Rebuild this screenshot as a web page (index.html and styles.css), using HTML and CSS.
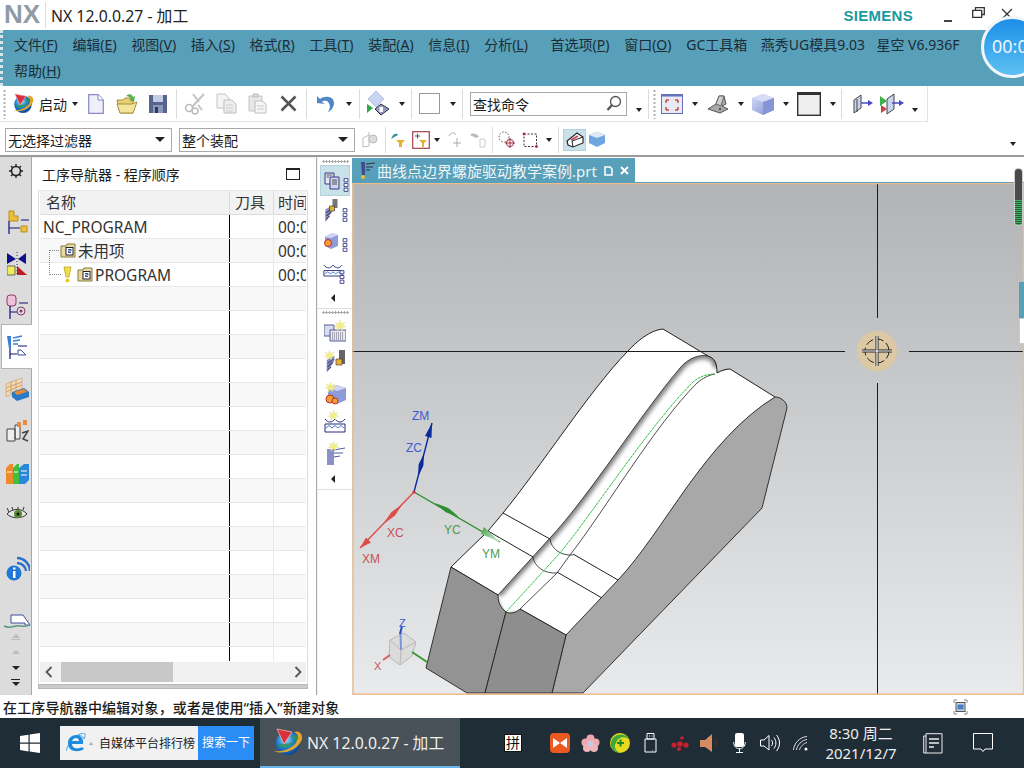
FILE: index.html
```html
<!DOCTYPE html>
<html lang="zh-CN">
<head>
<meta charset="utf-8">
<title>NX 12.0.0.27 - 加工</title>
<link rel="stylesheet" href="styles.css">
</head>
<body>
<svg class="defs" width="0" height="0" aria-hidden="true">
  <defs>
    <linearGradient id="bg" x1="0" y1="0" x2="0" y2="1"><stop offset="0" stop-color="#b2b3b5"/><stop offset="1" stop-color="#e9eaeb"/></linearGradient>
    <radialGradient id="globe" cx=".4" cy=".35" r=".7"><stop offset="0" stop-color="#9fe0f0"/><stop offset=".5" stop-color="#1f7fd0"/><stop offset="1" stop-color="#0d3f90"/></radialGradient>
    <linearGradient id="cube" x1="0" y1="0" x2="1" y2="1"><stop offset="0" stop-color="#d5dcf5"/><stop offset="1" stop-color="#7f8fd0"/></linearGradient>
    <linearGradient id="ymtip" x1="0" y1="0" x2="1" y2="1"><stop offset="0" stop-color="#3f9f3f"/><stop offset="1" stop-color="#e4f4e4"/></linearGradient>
    <filter id="soft" x="-20%" y="-20%" width="140%" height="140%"><feGaussianBlur stdDeviation="2"/></filter>
    <clipPath id="grooveclip"><path d="M498 595L550 538C590 495 640 415 680 368C688 358 700 354 708 356C714 358 717 362 717 368V373L715 374C709 375 703 378 697 383C655 425 605 510 570 555L557 573L520 609C516 613 510 614 506 612C500 607 498 602 498 595Z"/></clipPath>
    <symbol id="nxball" viewBox="0 0 30 30">
      <circle cx="15" cy="16" r="12" fill="url(#globe)"/>
      <path d="M5 19C9 14 14 20 22 13L17 9L24 8L24 15L22 13C15 24 8 20 5 19Z" fill="#2f9a50" opacity=".8"/>
      <path d="M1 24C9 28 25 24 29 12C30 6 25 3 21 5C26 7 26 12 22 17C16 23 8 25 1 24Z" fill="#e3a52a"/>
      <path d="M4 2L19 5L11 17Z" fill="#d8303c" stroke="#f4b0b0" stroke-width=".8"/>
    </symbol>
    <symbol id="treemini" viewBox="0 0 12 22">
      <path d="M3 1H9V6H3ZM3 8.500H9V13.500H3ZM3 16H9V21H3Z" fill="#fff" stroke="#242a78" stroke-width="1.300"/>
    </symbol>
    <symbol id="star" viewBox="0 0 14 14">
      <path d="M7 0L8.400 4.600L13 2.500L10 6.400L14 8L9.400 8.600L10 13L7 9.600L3.600 13L4.300 8.600L0 8L4 6.400L1.200 2.500L5.600 4.600Z" fill="#f4ee80" stroke="#d8d8a0" stroke-width=".4"/>
    </symbol>
    <symbol id="folder" viewBox="0 0 16 15">
      <path d="M1 3H6L7 1H15V14H1Z" fill="#e6d9a0" stroke="#8a7a3a"/>
      <rect x="6" y="4.500" width="7" height="7.500" fill="#fff" stroke="#223"/>
      <path d="M8 6.500H11V8H8.500V9.500H11" fill="none" stroke="#3050a0"/>
    </symbol>
    <symbol id="mill" viewBox="0 0 14 26">
      <path d="M2 10L11 5V11L2 25Z" fill="#8a90c0"/>
      <path d="M3 14L10 9M3 18L9 13M3 22L7 18" stroke="#3a3f70" stroke-width="1.200"/>
    </symbol>
  </defs>
</svg>

<div class="app">
  <header class="titlebar">
    <span class="logo">NX</span>
    <span class="title">NX 12.0.0.27 - 加工</span>
    <span class="brand">SIEMENS</span>
    <span class="winmin"></span>
    <svg class="winrestore" width="13" height="11" viewBox="0 0 13 11"><path d="M3.500 3V.7H12.300V7.500H10M.7 3.300H9.700V10.300H.7Z" fill="none" stroke="#333" stroke-width="1.300"/></svg>
  </header>

  <nav class="menubar">
    <span class="menu-item">文件(<u>F</u>)</span>
    <span class="menu-item">编辑(<u>E</u>)</span>
    <span class="menu-item">视图(<u>V</u>)</span>
    <span class="menu-item">插入(<u>S</u>)</span>
    <span class="menu-item">格式(<u>R</u>)</span>
    <span class="menu-item">工具(<u>T</u>)</span>
    <span class="menu-item">装配(<u>A</u>)</span>
    <span class="menu-item">信息(<u>I</u>)</span>
    <span class="menu-item">分析(<u>L</u>)</span>
    <span class="menu-item wide">首选项(<u>P</u>)</span>
    <span class="menu-item">窗口(<u>O</u>)</span>
    <span class="menu-item tight">GC工具箱</span>
    <span class="menu-item tighter">燕秀UG模具9.03</span>
    <span class="menu-item">星空 V6.936F</span>
    <span class="menu-item break">帮助(<u>H</u>)</span>
  </nav>

  <div class="toolbar tb1">
    <span class="grip"></span>
    <svg class="ml6" width="22" height="23"><use href="#nxball"/></svg>
    <span class="ml5 tb-text">启动</span>
    <span class="ml5 arrow"></span>
    <svg class="ml10" width="16" height="20" viewBox="0 0 16 20"><path d="M.7.700H10L15.300 6V19.300H.7Z" fill="#f0f0fd" stroke="#8888c4" stroke-width="1.200"/><path d="M10 .7V6H15.300" fill="#fff" stroke="#8888c4"/></svg>
    <svg class="ml12" width="22" height="22" viewBox="0 0 22 22"><path d="M1 7H7L9 5H17V20H4Z" fill="#e8cf72" stroke="#a89040"/><path d="M1 11H16L21 9L17 20H4Z" fill="#f4e49c" stroke="#a89040"/><path d="M10 3C13 0 16 1 17 4L19 3L18 9L13 7L15 6C14 4 12 3 10 3Z" fill="#58b04c"/></svg>
    <svg class="ml11" width="18" height="18" viewBox="0 0 18 18"><path d="M0 0H18V18H0Z" fill="#55658f"/><path d="M4 0H14V7H4Z" fill="#c6cde2"/><path d="M4 10H14V18H4Z" fill="#8b97b8"/><path d="M6 12H9V18H6Z" fill="#2e3a5c"/></svg>
    <span class="ml9 sep"></span>
    <svg class="ml7" width="22" height="22" viewBox="0 0 22 22"><path d="M20 1L8 14M9 1L15 9M14 12L18 17" stroke="#c4c4c4" stroke-width="2" fill="none"/><circle cx="5" cy="15" r="3.500" fill="none" stroke="#bbb" stroke-width="1.500"/><circle cx="11" cy="18" r="3" fill="none" stroke="#bbb" stroke-width="1.500"/></svg>
    <svg class="ml10" width="21" height="21" viewBox="0 0 21 21"><path d="M1 1H9L13 5V15H1Z" fill="#f4f4f4" stroke="#c4c4c4"/><path d="M8 7H16L20 11V20H8Z" fill="#efefef" stroke="#bdbdbd"/><path d="M10 12H17M10 15H17M10 18H17" stroke="#ccc"/></svg>
    <svg class="ml11" width="19" height="21" viewBox="0 0 19 21"><path d="M1 3H14V18H1Z" fill="#e8e8e8" stroke="#c4c4c4"/><path d="M5 1H10V4H5Z" fill="#ddd" stroke="#bbb"/><path d="M7 8H14L18 11V20H7Z" fill="#f6f6f6" stroke="#bdbdbd"/><path d="M9 13H16M9 16H16" stroke="#ccc"/></svg>
    <svg class="ml13" width="17" height="17" viewBox="0 0 17 17"><path d="M1.500 1.500L15.500 15.500M15.500 1.500L1.500 15.500" stroke="#555" stroke-width="2.600"/></svg>
    <span class="ml9 sep"></span>
    <svg class="ml10" width="18" height="19" viewBox="0 0 18 19"><path d="M0 9V2L3 5C8 1 17 2 17 9C17 13 14 17 11 18C13 15 14 11 11 8C9 6 6 7 5 8L8 10Z" fill="#4f86c8"/></svg>
    <span class="ml11 arrow"></span>
    <span class="ml7 sep"></span>
    <svg class="ml7" width="23" height="25" viewBox="0 0 23 25"><path d="M9 0L17 8L9 16L1 8Z" fill="#c9d3f2" stroke="#98a4d0" stroke-width=".6"/><path d="M14 13L22 18L14 24L8 18Z" fill="#8e96c8" stroke="#333"/><path d="M12.500 16H16V21H12.500Z" fill="#fff"/><path d="M0 13L6 17L0 22Z" fill="#2ea84c"/></svg>
    <span class="ml9 arrow"></span>
    <span class="ml6 sep"></span>
    <span class="ml7 blank-box"></span>
    <span class="ml10 arrow"></span>
    <span class="ml6 sep"></span>
    <div class="ml7 search">
      <span>查找命令</span>
      <svg width="16" height="17" viewBox="0 0 16 17"><circle cx="9.500" cy="6.500" r="5" fill="#fff" stroke="#555" stroke-width="1.300"/><path d="M6 10L1.500 15" stroke="#555" stroke-width="2.400"/></svg>
    </div>
    <span class="ml9 arrow low"></span>
    <span class="ml6 sep"></span>
    <span class="ml4 grip"></span>
    <svg class="ml5" width="22" height="20" viewBox="0 0 22 20"><rect x=".5" y=".5" width="21" height="19" fill="#e8eaf8" stroke="#6670b8"/><path d="M.5 .5H21.500V2.500H.5Z" fill="#6670b8"/><path d="M5 6L8 6M5 6L5 9M17 6L14 6M17 6L17 9M5 16L8 16M5 16L5 13M17 16L14 16M17 16L17 13" stroke="#d04a34" stroke-width="1.500"/></svg>
    <span class="ml9 arrow"></span>
    <svg class="ml9" width="22" height="20" viewBox="0 0 22 20"><path d="M1 15L9 10L12 2H17L19 10L15 12L21 15L13 19Z" fill="#a8a8a8" stroke="#555"/><path d="M12 2L9 10L14 12L17 2Z" fill="#cfcfcf" stroke="#666"/><circle cx="13" cy="15" r="1" fill="#333"/></svg>
    <span class="ml9 arrow"></span>
    <svg class="ml8" width="22" height="22" viewBox="0 0 22 22"><path d="M11 1L22 5V17L11 22L0 17V5Z" fill="url(#cube)"/><path d="M0 5L11 1L22 5L11 9Z" fill="#d6dcf6"/><path d="M11 9L22 5V17L11 22Z" fill="#8595d6"/></svg>
    <span class="ml9 arrow"></span>
    <svg class="ml8" width="24" height="24" viewBox="0 0 24 24"><rect x=".7" y=".7" width="22.600" height="22.600" fill="#efefef" stroke="#333" stroke-width="1.400"/><path d="M0 0H24V3H0Z" fill="#333"/></svg>
    <span class="ml9 arrow"></span>
    <span class="ml5 sep"></span>
    <svg class="ml11" width="20" height="20" viewBox="0 0 20 20"><path d="M1 6L8 1V14L1 19Z" fill="#c9d5f0" stroke="#444"/><path d="M4 5V18" stroke="#444"/><path d="M8 9H16" stroke="#4a4ac0" stroke-width="1.500"/><path d="M15 6L20 9L15 12Z" fill="#4a4ac0"/></svg>
    <svg class="ml7" width="24" height="22" viewBox="0 0 24 22"><path d="M7 6L14 1V16L7 21Z" fill="#c9d5f0" stroke="#444"/><path d="M0 3L7 8L0 13Z" fill="#3cb04c"/><path d="M1 12L7 16L1 20Z" fill="#d04040"/><path d="M12 10H20" stroke="#4a4ac0" stroke-width="1.500"/><path d="M19 7L24 10L19 13Z" fill="#4a4ac0"/></svg>
    <span class="ml8 arrow low"></span>
  </div>

  <div class="toolbar tb2">
    <div class="select sel-a"><span>无选择过滤器</span><i class="arrow big"></i></div>
    <div class="select sel-b"><span>整个装配</span><i class="arrow big"></i></div>
    <svg class="ml7" width="16" height="17" viewBox="0 0 16 17" fill="none" stroke="#bbb"><path d="M1 7L7 4V15L1 16ZM7 4V1"/><circle cx="11" cy="8" r="4" fill="#ddd"/></svg>
    <span class="ml7 sep short"></span>
    <svg class="ml5" width="14" height="15" viewBox="0 0 14 15"><path d="M1 5C3 1 6 1 7 3L5 4L0 7Z" fill="#2a8a94"/><path d="M5 8H14L11 11V15H8V11Z" fill="#e8b030"/></svg>
    <svg class="ml7" width="18" height="18" viewBox="0 0 18 18"><rect x=".7" y=".7" width="16.600" height="16.600" fill="#fff" stroke="#a04050" stroke-width="1.200"/><path d="M3 5H8M5.500 2.500V7.500" stroke="#555"/><path d="M7 9H15L12 12V16H10V12Z" fill="#e8b030"/></svg>
    <span class="ml4 arrow"></span>
    <svg class="ml8" width="14" height="16" viewBox="0 0 14 16" fill="none" stroke="#aaa"><path d="M1 4C3 0 6 0 8 3"/><path d="M9 6V15M5 11H13"/></svg>
    <svg class="ml8" width="16" height="16" viewBox="0 0 16 16"><path d="M0 3C3 0 7 2 9 5L6 6Z" fill="#bbb"/><path d="M10 7H15V15H10Z" fill="none" stroke="#ccc"/></svg>
    <span class="ml6 sep short"></span>
    <svg class="ml5" width="18" height="18" viewBox="0 0 18 18" fill="none"><circle cx="6" cy="6" r="5" stroke="#555" stroke-dasharray="1.500 1.500"/><circle cx="12" cy="12" r="3.600" stroke="#a03040"/><path d="M7 12H17M12 7V17" stroke="#a03040"/></svg>
    <svg class="ml6" width="16" height="16" viewBox="0 0 16 16" fill="none"><rect x="2" y="2" width="12.500" height="12.500" stroke="#333" stroke-dasharray="2 1.500"/><circle cx="2" cy="2" r="1.400" fill="#b03040"/><circle cx="14.500" cy="14.500" r="1.400" fill="#b03040"/></svg>
    <span class="ml8 arrow"></span>
    <span class="ml6 sep short"></span>
    <span class="ml4 toggle"><svg width="18" height="16" viewBox="0 0 18 16"><path d="M1 9L11 1L17 5V11L7 15L2 13Z" fill="#fff" stroke="#222" stroke-width="1.100"/><path d="M5 8L12 4" stroke="#c04050" stroke-width="1.500"/><path d="M7 15L6 9L17 5" fill="none" stroke="#222"/></svg></span>
    <svg class="ml3" width="16" height="15" viewBox="0 0 16 15"><path d="M8 0L16 3V11L8 15L0 11V3Z" fill="#6ea6e0"/><path d="M0 3L8 0L16 3L8 6Z" fill="#e0e8f6"/></svg>
    <span class="arrow end"></span>
  </div>

  <main class="workspace">
    <aside class="rail">
      <svg class="rail-gear" width="14" height="14" viewBox="0 0 14 14"><circle cx="7" cy="7" r="4.500" fill="none" stroke="#222" stroke-width="1.600"/><path d="M7 0V3M7 11V14M0 7H3M11 7H14M2 2L4 4M10 10L12 12M12 2L10 4M4 10L2 12" stroke="#222" stroke-width="1.400"/></svg>
      <svg class="rail-ic r1" width="24" height="24" viewBox="0 0 24 24"><path d="M4 1H9V6H13V11H4Z" fill="#edbf3c" stroke="#b98f1c"/><path d="M16 16H22V22H16Z" fill="#edbf3c" stroke="#b98f1c"/><path d="M4 11V24M4 18H15M16 10H24" stroke="#10107a" stroke-width="1.200" fill="none"/></svg>
      <svg class="rail-ic r2" width="20" height="24" viewBox="0 0 20 24"><path d="M0 1L9 7V1L9 7L0 12ZM19 1L11 7L19 12Z" fill="#10108a"/><path d="M0 14H8V23H0Z" fill="#f2ea5a" stroke="#666"/><path d="M10 14L20 23H10Z" fill="#c01c1c"/><path d="M10 0V24" stroke="#333" stroke-dasharray="1 2"/></svg>
      <svg class="rail-ic r3" width="22" height="26" viewBox="0 0 22 26"><rect x="1" y="1" width="9" height="11" rx="3" fill="#f0bfd8" stroke="#8a3a6a"/><path d="M4 12V25M4 18H11M13 9H22" stroke="#10107a" stroke-width="1.200" fill="none"/><circle cx="15" cy="17" r="4" fill="none" stroke="#8a3a6a"/><circle cx="15" cy="17" r="1.500" fill="#8a3a6a"/></svg>
      <div class="rail-tab"><svg width="22" height="24" viewBox="0 0 22 24"><path d="M1 1H5V14H3Z" fill="#3a80d8"/><path d="M7 3L16 1M7 6L14 5M7 9L12 9" stroke="#3a80d8" fill="none" stroke-width="1.300"/><path d="M4 14V24M4 19H11M12 11H21" stroke="#10107a" stroke-width="1.200" fill="none"/><path d="M12 15H15L20 20H12Z" fill="#fff" stroke="#3a4aa0"/></svg></div>
      <svg class="rail-ic r5" width="24" height="24" viewBox="0 0 24 24"><path d="M1 7L17 1V12L1 20Z" fill="#f0d8b0" stroke="#c09060" stroke-width=".5"/><path d="M1 11L17 5M1 15L17 8M6 4V18M11 3V15" stroke="#c09060" stroke-width=".7"/><path d="M7 15L19 11L24 15V20L12 24L7 20Z" fill="#2a78c8"/><path d="M9 15L19 12L22 15L12 18Z" fill="#e88a30"/></svg>
      <svg class="rail-ic r6" width="24" height="24" viewBox="0 0 24 24"><path d="M2 10H10V22H2ZM10 6H15V20H10Z" fill="#eee" stroke="#444"/><path d="M12 3H16V8H12ZM18 1H22V6H18Z" fill="#e88a40"/><path d="M17 14L23 12L18 20L23 22" fill="none" stroke="#444" stroke-width="1.500"/></svg>
      <svg class="rail-ic r7" width="24" height="22" viewBox="0 0 24 22"><path d="M1 5L5 1H8V21H1Z" fill="#ec8a2c"/><path d="M8 5L12 1H14V21H8Z" fill="#3ec03e"/><path d="M14 5L19 1H24V17L20 21H14Z" fill="#2a88d8"/><path d="M16 8H22M16 12H22M2 9H7M9 9H13" stroke="#fff"/></svg>
      <svg class="rail-ic r8" width="22" height="13" viewBox="0 0 22 13"><path d="M1 7C6 1 16 1 21 7C16 12 6 12 1 7Z" fill="#e8e8e8" stroke="#333"/><circle cx="12" cy="7" r="4" fill="#5a8a30"/><circle cx="12" cy="7" r="1.500" fill="#111"/><path d="M3 5L1 1M7 3L6 0M12 2V0M17 3L18 0" stroke="#333"/></svg>
      <svg class="rail-ic r9" width="24" height="25" viewBox="0 0 24 25"><circle cx="8" cy="17" r="7.500" fill="#1f78d8"/><path d="M7 15H9.500V22H7ZM7 11.500H9.500V13.500H7Z" fill="#fff"/><path d="M11 7C16 7 20 11 20 15M11 2C19 2 24 9 24 15" stroke="#2a70c8" stroke-width="2.400" fill="none"/></svg>
      <svg class="rail-ic r10" width="28" height="16" viewBox="0 0 28 16"><path d="M8 1H20L27 11H22V9H8Z" fill="#fff" stroke="#4050a0"/><path d="M1 12C8 16 12 10 18 12C22 13 24 12 27 11" fill="none" stroke="#5a9a80" stroke-width="1.500"/></svg>
      <span class="rail-arrow up dim first"></span>
      <span class="rail-bar dim"></span>
      <span class="rail-arrow up dim second"></span>
      <span class="rail-arrow dn"></span>
      <span class="rail-bar"></span>
      <span class="rail-arrow dn last"></span>
    </aside>

    <section class="navigator">
      <div class="nav-head">
        <span>工序导航器 - 程序顺序</span>
        <span class="nav-window"></span>
      </div>
      <div class="table">
        <div class="thead">
          <div class="c1">名称</div><div class="c2">刀具</div><div class="c3">时间</div>
        </div>
        <div class="tbody">
          <div class="row"><div class="c1">NC_PROGRAM</div><div class="c2"></div><div class="c3">00:00:00</div></div>
          <div class="row"><div class="c1 lvl"><span class="dots first"></span><svg width="16" height="15"><use href="#folder"/></svg>未用项</div><div class="c2"></div><div class="c3">00:00:00</div></div>
          <div class="row"><div class="c1 lvl"><span class="dots second"></span><svg class="warn" width="9" height="17" viewBox="0 0 9 17"><path d="M1 1H8L6 11H3Z" fill="#f2e040" stroke="#b09820" stroke-width=".7"/><circle cx="4.500" cy="14.500" r="2" fill="#e8c820"/></svg><svg width="16" height="15"><use href="#folder"/></svg>PROGRAM</div><div class="c2"></div><div class="c3">00:00:00</div></div>
          <div class="row"><div class="c1"></div><div class="c2"></div><div class="c3"></div></div>
          <div class="row"><div class="c1"></div><div class="c2"></div><div class="c3"></div></div>
          <div class="row"><div class="c1"></div><div class="c2"></div><div class="c3"></div></div>
          <div class="row"><div class="c1"></div><div class="c2"></div><div class="c3"></div></div>
          <div class="row"><div class="c1"></div><div class="c2"></div><div class="c3"></div></div>
          <div class="row"><div class="c1"></div><div class="c2"></div><div class="c3"></div></div>
          <div class="row"><div class="c1"></div><div class="c2"></div><div class="c3"></div></div>
          <div class="row"><div class="c1"></div><div class="c2"></div><div class="c3"></div></div>
          <div class="row"><div class="c1"></div><div class="c2"></div><div class="c3"></div></div>
          <div class="row"><div class="c1"></div><div class="c2"></div><div class="c3"></div></div>
          <div class="row"><div class="c1"></div><div class="c2"></div><div class="c3"></div></div>
          <div class="row"><div class="c1"></div><div class="c2"></div><div class="c3"></div></div>
          <div class="row"><div class="c1"></div><div class="c2"></div><div class="c3"></div></div>
          <div class="row"><div class="c1"></div><div class="c2"></div><div class="c3"></div></div>
          <div class="row"><div class="c1"></div><div class="c2"></div><div class="c3"></div></div>
          <div class="row"><div class="c1"></div><div class="c2"></div><div class="c3"></div></div>
        </div>
        <div class="hscroll">
          <svg width="8" height="12" viewBox="0 0 8 12"><path d="M6.500 1L1.500 6L6.500 11" fill="none" stroke="#555" stroke-width="1.800"/></svg>
          <span class="thumb"></span>
          <svg width="8" height="12" viewBox="0 0 8 12"><path d="M1.500 1L6.500 6L1.500 11" fill="none" stroke="#555" stroke-width="1.800"/></svg>
        </div>
        <div class="nav-foot"></div>
      </div>
    </section>

    <aside class="sidebar">
      <span class="side-grip"></span>
      <span class="side-btn on"><svg width="16" height="18" viewBox="0 0 16 18"><path d="M1 1H10V12H1Z" fill="#e8e8f4" stroke="#333a80"/><path d="M6 5H15V17H6Z" fill="#d0d4ec" stroke="#333a80"/><path d="M2.500 3H8.500M2.500 5H5M8 8H13M8 10H13M8 12H13" stroke="#555"/></svg><svg class="mini" width="8" height="14"><use href="#treemini"/></svg></span>
      <span class="side-btn"><svg width="16" height="24" viewBox="0 0 15 24"><use href="#mill" width="12" height="22" x="0" y="2"/><path d="M9 0H14V9H9Z" fill="#777"/><path d="M6 7H11V12H6Z" fill="#e8b030" stroke="#333" stroke-width=".6"/></svg><svg class="mini" width="8" height="14"><use href="#treemini"/></svg></span>
      <span class="side-btn"><svg width="16" height="17" viewBox="0 0 16 17"><path d="M2 4L9 0L15 2V13L8 16L2 13Z" fill="#8f9ad8"/><path d="M2 4L9 0L15 2L8 5Z" fill="#cfd5f2"/><circle cx="5" cy="10" r="3.500" fill="#f0a030" stroke="#c03030"/></svg><svg class="mini" width="8" height="14"><use href="#treemini"/></svg></span>
      <span class="side-btn"><svg class="wide-ic" width="20" height="14" viewBox="0 2 22 15"><path d="M1 3C4 7 8 7 11 3C14 7 18 7 21 3" fill="none" stroke="#242a78"/><path d="M1 9H21M1 15H21V10M1 15V9" fill="none" stroke="#242a78"/><path d="M2 12.500L5 10.500L8 12.500L11 10.500L14 12.500L17 10.500L20 12.500" fill="none" stroke="#4a78c8"/></svg><svg class="mini over" width="8" height="14"><use href="#treemini"/></svg></span>
      <span class="side-arrow"></span>
      <span class="side-sep"></span>
      <span class="side-grip"></span>
      <svg class="side-new firstnew" width="22" height="22" viewBox="0 0 22 22"><path d="M0 5H10V16H0Z" fill="#d8dcf0" stroke="#555a90"/><path d="M6 10H22V21H6Z" fill="#e8e8f4" stroke="#555a90"/><path d="M8 13H20M8 15H20M8 17H20M8 19H20" stroke="#667" stroke-dasharray="1 1"/><use href="#star" x="10" y="0" width="12" height="12"/></svg>
      <svg class="side-new" width="22" height="24" viewBox="0 0 22 24"><use href="#mill" x="1" y="1" width="12" height="23"/><path d="M15 0H21V14H15Z" fill="#666"/><path d="M12 9H18V15H12Z" fill="#e8b030" stroke="#333" stroke-width=".6"/><use href="#star" x="0" y="0" width="11" height="11"/></svg>
      <svg class="side-new" width="22" height="24" viewBox="0 0 22 24"><path d="M4 6L13 3L22 6V18L13 22L4 18Z" fill="#8f9ad8"/><path d="M4 6L13 3L22 6L13 9Z" fill="#d0d6f2"/><circle cx="6" cy="17" r="4" fill="#f0a030" stroke="#c03030"/><circle cx="11" cy="19" r="3" fill="#f0a030" stroke="#c03030"/><use href="#star" x="1" y="0" width="11" height="11"/></svg>
      <svg class="side-new close" width="22" height="23" viewBox="0 0 22 23"><path d="M1 9C4 13 8 13 11 9C14 13 18 13 21 9" fill="none" stroke="#242a78"/><path d="M1 14H21V22H1Z" fill="none" stroke="#242a78"/><path d="M2 18L5 15.500L8 18L11 15.500L14 18L17 15.500L20 18" fill="none" stroke="#4a78c8"/><use href="#star" x="4" y="0" width="11" height="11"/></svg>
      <svg class="side-new" width="20" height="24" viewBox="0 0 20 24"><path d="M2 8H9V24H2Z" fill="#8a90c8"/><path d="M9 9L20 7M9 12L18 12M9 16L15 15" stroke="#4a5aa8" fill="none"/><use href="#star" x="3" y="0" width="11" height="11"/></svg>
      <span class="side-arrow small"></span>
      <span class="side-sep"></span>
    </aside>

    <section class="viewarea">
      <div class="tabrow">
        <div class="tab">
          <svg width="18" height="20" viewBox="0 0 18 20"><path d="M3 1H7V14H4Z" fill="#404c90"/><path d="M8 3L17 2M8 6L15 6M8 9L12 9" stroke="#334" fill="none"/><circle cx="5" cy="16" r="2" fill="#e8c030"/></svg>
          <span class="tab-name">曲线点边界螺旋驱动教学案例.prt</span>
          <svg class="tab-doc" width="9" height="10" viewBox="0 0 9 10"><path d="M1 1H6L8 3V9H1Z" fill="none" stroke="#fff" stroke-width="1.500"/></svg>
          <svg class="tab-x" width="9" height="9" viewBox="0 0 9 9"><path d="M1 1L8 8M8 1L1 8" stroke="#fff" stroke-width="2"/></svg>
        </div>
      </div>
      <div class="viewport">
        <svg class="scene" viewBox="352 183 672 512" width="672" height="512">
          <rect x="352" y="183" width="672" height="512" fill="url(#bg)"/>
          <path d="M451 567L488 531L503 513C540 468 590 390 627 352C636 342 650 330 663 329L708 356C714 358 717 362 717 373L730 369L775 397C705 440 665 530 618 580L566 635L520 609L506 612L498 595Z" fill="#fff"/>
          <g clip-path="url(#grooveclip)"><path d="M498 595L550 538C590 495 640 415 680 368C688 358 700 354 708 356C714 358 717 362 717 368" fill="none" stroke="#7d7d7d" stroke-width="7" filter="url(#soft)"/></g>
          <g stroke="#222" stroke-width="1" fill="none">
            <path d="M451 567L488 531L503 513C540 468 590 390 627 352C636 342 650 330 663 329L708 356C714 358 717 362 717 373"/>
            <path d="M717 373C722 370 726 369 730 369L775 397"/>
            <path d="M498 595L550 538C590 495 640 415 680 368C688 358 700 354 708 356" stroke-width=".8"/>
            <path d="M520 609L557 573L570 555C605 510 655 425 697 383C703 378 709 375 715 374" stroke-width=".8"/>
            <path d="M503 513L550 539M488 531L533 557M573 554L618 580M557 572L602 598"/>
            <path d="M550 539C551 548 560 556 573 555M533 557C534 566 544 574 557 573" stroke-width=".8"/>
            <path d="M451 567L498 595M520 609L566 635"/>
          </g>
          <path d="M506 612L560 553C595 510 650 425 693 382C700 376 708 374 715 374" fill="none" stroke="#35c23f" stroke-width="1" stroke-dasharray="3 .6"/>
          <path d="M566 635L618 580C665 530 705 440 775 397C781 397 787 402 787 408L762 508L583 693H552Z" fill="#a8a8a8" stroke="#222" stroke-width=".9"/>
          <path d="M451 567L426 668L467 693H485L506 612C500 607 498 602 498 595Z" fill="#939393" stroke="#222" stroke-width=".9"/>
          <path d="M506 612C510 614 516 613 520 609L566 635L552 693H485Z" fill="#8e8e8e" stroke="#222" stroke-width=".9"/>
          <path d="M352 351.500H845M909 351.500H1024M877.500 183V318M877.500 383V694" stroke="#1b1b1b" stroke-width="1" fill="none"/>
          <circle cx="877" cy="351" r="20" fill="#dcc8a2"/>
          <circle cx="877" cy="351" r="12" fill="none" stroke="#222" stroke-dasharray="8 3"/>
          <path d="M862 351H892M877 336V366" stroke="#222" stroke-width="3"/>
          <path d="M862 351H892M877 336V366" stroke="#fff" stroke-width="1.200"/>
          <path d="M414 492L432 423" stroke="#0c2a9c" stroke-width="1.400"/>
          <path d="M418 477L423.400 465.600L424 453.400L418.600 464.400ZM431.500 438L425 436L432 423Z" fill="#0c2a9c"/>
          <path d="M414 492L360 548" stroke="#dd4b4b" stroke-width="1.400"/>
          <path d="M402.700 503.900L394.800 515.700L383.300 524.100L391.200 512.300ZM371 542.500L366 537.500L360 548Z" fill="#dd4b4b"/>
          <path d="M414 492L500 542" stroke="#2f8f2f" stroke-width="1.400"/>
          <path d="M435 503L445.800 512.200L459 517L448.300 507.900Z" fill="#2f8f2f"/>
          <path d="M484 527L481 534L500 542Z" fill="url(#ymtip)"/>
          <circle cx="414" cy="492" r="1.500" fill="#c33"/>
          <g class="axis">
            <text x="412" y="420" fill="#3c5bd0">ZM</text>
            <text x="406" y="452" fill="#3c5bd0">ZC</text>
            <text x="387" y="537" fill="#c8505a">XC</text>
            <text x="444" y="534" fill="#4c9a55">YC</text>
            <text x="482" y="558" fill="#4c9a55">YM</text>
            <text x="362" y="563" fill="#c8505a">XM</text>
          </g>
          <path d="M390 640L404 633L416 642L412 656L400 665L389 657Z" fill="#d8d8d8" fill-opacity=".8" stroke="#b8b8b8"/>
          <path d="M390 640L401 650L416 642M401 650L400 665" fill="none" stroke="#b8b8b8"/>
          <path d="M401 650L400.500 632" stroke="#7f94d8" stroke-width="2"/>
          <path d="M400 634L402 626" stroke="#2a50c0" stroke-width="2"/>
          <path d="M390 655L383 660" stroke="#d86060" stroke-width="2"/>
          <path d="M412 652L427 662" stroke="#3a9a3a" stroke-width="2"/>
          <g class="axis small">
            <text x="399" y="627" fill="#3c5bd0">Z</text>
            <text x="374" y="670" fill="#c8505a">X</text>
          </g>
          <path d="M353 183V694M352 694.300H1024M1023.500 183V694M352 183.500H1024" fill="none" stroke="#e9bd90" stroke-width="1.400"/>
        </svg>
        <div class="roller"><span class="roller-dark"></span><span class="roller-green"></span></div>
        <div class="edge-flag"><span class="edge-teal"></span><span class="edge-white"></span></div>
      </div>
    </section>
  </main>

  <div class="status">
    <span>在工序导航器中编辑对象，或者是使用“插入”新建对象</span>
    <svg width="15" height="16" viewBox="0 0 15 16"><path d="M1 4V1H4M11 1H14V4M14 12V15H11M4 15H1V12" fill="none" stroke="#888"/><rect x="3" y="3.500" width="9" height="9" fill="#c8d8ec" stroke="#555"/><rect x="4.500" y="5.500" width="6" height="5" fill="#4a80c0"/></svg>
  </div>

  <footer class="taskbar">
    <svg class="win" width="20" height="20" viewBox="0 0 20 20"><path d="M0 3L8.500 1.700V9.500H0ZM9.700 1.500L20 0V9.500H9.700ZM0 10.700H8.500V18.400L0 17ZM9.700 10.700H20V20L9.700 18.500Z" fill="#fff"/></svg>
    <div class="tb-search">
      <svg width="20" height="20" viewBox="0 0 20 20"><path d="M16 11H6C6 15 11 17 16 14L18 16C12 20 2 19 2 10C2 5 6 2 10 2C14 2 18 5 17 11ZM6 8H13C13 4 7 4 6 8Z" fill="#1d8be0"/><path d="M0 18C3 8 10 1 18 0C20 1 19 4 18 6C17 3 14 2 11 3" fill="none" stroke="#1d8be0" stroke-width=".8"/></svg>
      <span class="tri"></span>
      <span class="tb-q">自媒体平台排行榜</span>
      <span class="tb-go">搜索一下</span>
    </div>
    <div class="tb-app">
      <svg width="30" height="30"><use href="#nxball"/></svg>
      <span>NX 12.0.0.27 - 加工</span>
    </div>
    <span class="ime">拼</span>
    <div class="tray">
      <svg width="20" height="20" viewBox="0 0 20 20"><rect width="20" height="20" rx="4" fill="#ea5a20"/><path d="M3 5L10 10L3 15ZM17 5L10 10L17 15Z" fill="#fff"/></svg>
      <svg class="t1" width="19" height="19" viewBox="0 0 19 19"><circle cx="9.500" cy="4.500" r="4" fill="#f0a8b0"/><circle cx="4.500" cy="8.500" r="4" fill="#f0a8b0"/><circle cx="14.500" cy="8.500" r="4" fill="#f0a8b0"/><circle cx="6" cy="14" r="4" fill="#eeb4b8"/><circle cx="13" cy="14" r="4" fill="#eeb4b8"/><circle cx="9.500" cy="9.500" r="3" fill="#c9c8e0"/></svg>
      <svg class="t2" width="20" height="20" viewBox="0 0 20 20"><circle cx="10" cy="10" r="10" fill="#e8d820"/><path d="M1 9A10 10 0 0 1 19 6C13 2 7 5 6 10C3 14 6 18 10 20C3 19 0 14 1 9Z" fill="#3aa83a"/><path d="M7 10H14M10.500 6.500V13.500" stroke="#1a8a2a" stroke-width="2"/></svg>
      <svg class="t3" width="13" height="20" viewBox="0 0 13 20" fill="none" stroke="#fff"><path d="M3 .5H10V6H3ZM1 6H12V19H1Z"/><path d="M5 3H6M7.500 3H8.500"/><path d="M8 17L10 19L13 16" stroke="#999"/></svg>
      <svg class="t4" width="19" height="15" viewBox="0 0 19 15"><g fill="#c8202c"><circle cx="3" cy="9" r="2.600"/><circle cx="9" cy="8" r="2.800"/><circle cx="15" cy="9" r="2.600"/><circle cx="8" cy="13" r="2"/><circle cx="11" cy="2" r="1.800"/></g></svg>
      <svg class="t5" width="20" height="20" viewBox="0 0 20 20"><path d="M0 7H5L12 1V19L5 14H0Z" fill="#d88a60"/><path d="M14 6C17 8 17 12 14 14" fill="none" stroke="#5a2a22" stroke-width="1.500"/></svg>
      <svg class="t6" width="13" height="20" viewBox="0 0 13 20"><rect x="2" y="0" width="9" height="14" rx="2" fill="#fff"/><path d="M.7 9C.7 18 12.300 18 12.300 9M6.500 15V19.500M3 19.500H10" fill="none" stroke="#fff"/></svg>
      <svg class="t7" width="20" height="20" viewBox="0 0 20 20" fill="none" stroke="#fff"><path d="M.5 7H4L9 2.500V17L4 13H.5Z"/><path d="M11.500 7C13 9 13 11 11.500 13M14 4.500C16.500 8 16.500 12 14 15.500M16.500 2C20.500 7 20.500 13 16.500 18"/></svg>
      <svg class="t8" width="15" height="15" viewBox="0 0 15 15" fill="none" stroke="#ddd"><path d="M.5 14C1 7 7 1 14 .5M3.500 14C4 9 9 4 14 3.500M6.500 14C7 11 11 7 14 6.500"/><circle cx="13" cy="13" r="1.500" fill="#fff" stroke="none"/></svg>
    </div>
    <div class="clock"><span>8:30 周二</span><span>2021/12/7</span></div>
    <svg class="notes" width="20" height="21" viewBox="0 0 20 21" fill="none" stroke="#eee"><path d="M3 3L3 20H19V.7H3V3H.7V20H3"/><path d="M6 6H16M6 10H16M6 14H11" stroke-width="1.300"/></svg>
    <svg class="bubble" width="20" height="20" viewBox="0 0 20 20"><path d="M.5 .5H19.500V16H12L10 18.500L8 16H.5Z" fill="none" stroke="#fff"/></svg>
  </footer>

  <div class="winclose">
    <svg width="12" height="12" viewBox="0 0 12 12"><path d="M1 1L11 11M11 1L1 11" stroke="#333" stroke-width="1.300"/></svg>
  </div>
  <div class="timer"><span>00:00</span></div>
</div>
</body>
</html>
```

FILE: styles.css
```css
* { box-sizing: border-box; }
html, body { margin: 0; padding: 0; width: 1024px; height: 768px; overflow: hidden; background: #fff; }
body { font-family: "Noto Sans", "Noto Sans CJK SC", sans-serif; color: #1c1c1c; font-size: 14px; }
.defs { display: block; height: 0; width: 0; }
.app { position: relative; width: 1024px; height: 768px; overflow: hidden; display: flex; flex-direction: column; }
svg { flex: none; display: block; }

.titlebar { height: 30px; display: flex; align-items: center; background: #fff; padding-left: 4px; }
.logo { font: bold 26px/30px "Liberation Sans", sans-serif; color: #8f9ca6; width: 42px; border-right: 1px solid #ddd; height: 26px; line-height: 25px; }
.title { margin-left: 5px; font-size: 15.800px; color: #222; }
.brand { margin-left: auto; font: bold 15px "Liberation Sans", sans-serif; color: #1a9a9e; letter-spacing: .3px; }
.winmin { width: 8px; height: 2px; background: #444; margin-left: 31px; margin-top: 11px; }
.winrestore { margin-left: 20px; margin-top: -5px; margin-right: 39px; }
.winclose { position: absolute; left: 1001px; top: 8px; }

.menubar { height: 56px; background: #589fb9; display: flex; flex-wrap: wrap; align-content: flex-start; padding: 2px 0 0 11px; color: #1b2d36; font-size: 14px; border-left: 3px dotted #d8e6ea; }
.menu-item { line-height: 26px; margin-right: 14.700px; white-space: nowrap; }
.menu-item.wide { margin-left: 8px; }
.menu-item.tight { margin-right: 13.500px; }
.menu-item.tighter { margin-right: 11.500px; }
.menu-item.break { flex-basis: 100%; }

.toolbar { display: flex; align-items: center; flex: none; }
.tb1 { height: 36px; width: 928px; padding-left: 3px; border-bottom: 1px solid #e4e4e4; border-right: 1px solid #e4e4e4; position: relative; }
.tb2 { height: 35px; padding-left: 5px; border-bottom: 2px solid #9a9a9a; padding-top: 2px; position: relative; }
.tb-text { font-size: 14px; }
.grip { width: 3px; height: 30px; background-image: radial-gradient(circle, #aaa 1px, transparent 1.200px); background-size: 3px 4px; }
.sep { width: 1px; height: 30px; background: #dcdcdc; }
.sep.short { height: 26px; }
.arrow { width: 0; height: 0; border-left: 3.500px solid transparent; border-right: 3.500px solid transparent; border-top: 4px solid #222; flex: none; }
.arrow.low { margin-top: 12px; }
.arrow.big { border-left-width: 5px; border-right-width: 5px; border-top-width: 5px; }
.arrow.end { margin-left: auto; margin-right: 8px; margin-top: 8px; }
.blank-box { width: 21px; height: 21px; border: 1px solid #999; background: #fff; }
.search { width: 157px; height: 24px; border: 1px solid #a8a8a8; display: flex; align-items: center; justify-content: space-between; padding: 0 4px 0 2px; font-size: 14px; }
.select { height: 24px; border: 1px solid #a8a8a8; display: flex; align-items: center; justify-content: space-between; padding: 0 6px 0 2px; font-size: 14px; }
.sel-a { width: 167px; }
.sel-b { width: 176px; margin-left: 7px; }
.toggle { width: 23px; height: 22px; background: #c9e2ea; border: 1px solid #b2d2dc; display: flex; align-items: center; justify-content: center; }
.ml3 { margin-left: 3px; } .ml4 { margin-left: 4px; } .ml5 { margin-left: 5px; } .ml6 { margin-left: 6px; } .ml7 { margin-left: 7px; } .ml8 { margin-left: 8px; } .ml9 { margin-left: 9px; } .ml10 { margin-left: 10px; } .ml11 { margin-left: 11px; } .ml12 { margin-left: 12px; } .ml13 { margin-left: 13px; }

.workspace { height: 538px; display: flex; flex: none; }

.rail { width: 32px; background: #dcdcdc; border-right: 1px solid #a8a8a8; display: flex; flex-direction: column; align-items: center; flex: none; }
.rail-gear { margin-top: 7px; }
.rail-ic { margin-left: 3px; }
.r1 { margin-top: 32px; } .r2 { margin-top: 18px; } .r3 { margin-top: 18px; } .r5 { margin-top: 8px; } .r6 { margin-top: 18px; } .r7 { margin-top: 20px; } .r8 { margin-top: 22px; } .r9 { margin-top: 36px; margin-left: 5px; } .r10 { margin-top: 33px; }
.rail-tab { width: 31px; height: 45px; margin-top: 4px; align-self: flex-end; margin-right: -1px; background: #fff; border: 1px solid #b4b4b4; border-right: 0; display: flex; align-items: center; justify-content: center; }
.rail-bar { width: 9px; height: 1px; background: #222; margin-top: 9px; flex: none; }
.rail-bar.dim { background: #bbb; margin-top: 1px; }
.rail-arrow { width: 0; height: 0; border-left: 4px solid transparent; border-right: 4px solid transparent; flex: none; }
.rail-arrow.up { border-bottom: 4px solid #bbb; }
.rail-arrow.first { margin-top: 4px; }
.rail-arrow.second { margin-top: 10px; }
.rail-arrow.dn { border-top: 4px solid #222; margin-top: 12px; }
.rail-arrow.last { margin-top: 2px; }

.navigator { width: 285px; border-right: 1px solid #a8a8a8; background: #fff; padding: 0 8px 0 6px; border-top: 1px solid #eee; flex: none; }
.nav-head { height: 32px; display: flex; align-items: center; justify-content: space-between; padding: 0 8px 0 4px; font-size: 14px; }
.nav-window { width: 14px; height: 12px; border: 1px solid #222; border-top-width: 2px; margin-right: 0; }
.table { border: 1px solid #dcdcdc; border-bottom: 0; border-top-color: #e8e8e8; padding: 0 1px; height: 498px; width: 270px; display: flex; flex-direction: column; }
.thead { display: flex; height: 24px; background: #f2f2f2; border-bottom: 1px solid #ddd; flex: none; line-height: 23px; font-size: 15px; color: #333; overflow: hidden; }
.thead .c1 { padding-left: 6px; }
.thead .c1, .thead .c2 { border-right: 1px solid #dcdcdc; }
.c1 { width: 190px; flex: none; }
.c2 { width: 44px; flex: none; padding-left: 5px; white-space: nowrap; }
.c3 { flex: 1; padding-left: 4px; overflow: hidden; white-space: nowrap; min-width: 0; }
.tbody { height: 446px; overflow: hidden; flex: none; }
.row { display: flex; height: 24px; border-bottom: 1px solid #e8e8e8; line-height: 24px; font-size: 15.500px; color: #333; }
.row:nth-child(even) { background: #f8f8f8; }
.row .c1 { border-right: 1px solid #000; padding-left: 3px; display: flex; align-items: center; }
.row .c2 { border-right: 1px solid #e8e8e8; }
.row .c1.lvl { position: relative; padding-left: 20px; gap: 2px; }
.warn { margin: 0 3px 0 0; }
.row:nth-child(3) .c1.lvl { padding-left: 23px; }
.dots { position: absolute; left: 9px; border-left: 1px dotted #888; border-bottom: 1px dotted #888; width: 10px; }
.dots.first { top: 11px; height: 1px; border-left: 0; }
.dots.second { top: -13px; height: 25px; width: 12px; }
.hscroll { height: 20px; margin-top: 1px; background: #f0f0f0; display: flex; align-items: center; padding: 0 4px 0 5px; flex: none; }
.thumb { width: 112px; height: 20px; background: #c8c8c8; margin-left: 8px; margin-right: auto; }
.nav-foot { height: 5px; margin: 2px -2px 0; background: #ccc; border: 1px solid #b8b8b8; flex: none; }

.sidebar { width: 35px; background: #fff; display: flex; flex-direction: column; align-items: center; padding-top: 3px; flex: none; border-left: 1px solid #f0f0f0; }
.side-grip { width: 27px; height: 3px; background-image: radial-gradient(circle, #aaa 1px, transparent 1.200px); background-size: 3px 3px; margin-bottom: 2px; flex: none; }
.side-btn { width: 30px; height: 30px; display: flex; align-items: center; position: relative; padding-left: 3px; flex: none; }
.side-btn.on { background: #c9e2ea; border: 1px solid #b2d2dc; padding-left: 3px; height: 31px; }
.mini { margin-left: 2px; margin-top: 8px; }
.mini.over { margin-left: -5px; margin-top: 11px; }
.side-arrow { width: 0; height: 0; border-top: 4px solid transparent; border-bottom: 4px solid transparent; border-right: 4px solid #222; margin-top: 8px; margin-bottom: 5px; margin-right: 4px; flex: none; }
.side-arrow.small { margin-top: 10px; }
.side-sep { width: 100%; height: 1px; background: #e0e0e0; margin: 1px 0 2px; flex: none; }
.side-new { margin-top: 8px; }
.side-new.firstnew { margin-top: 4px; }
.side-new.close { margin-top: 4px; }

.viewarea { flex: 1; display: flex; flex-direction: column; min-width: 0; }
.tabrow { height: 26px; flex: none; padding-top: 1px; border-bottom: 1px solid #5a9fb8; display: flex; }
.tab { width: 283px; height: 25px; background: #589fb9; display: flex; align-items: center; padding-left: 6px; color: #eef6f8; font-size: 15px; }
.tab-name { margin-left: 1px; white-space: nowrap; }
.tab-doc { margin-left: 7px; }
.tab-x { margin-left: 7px; }
.viewport { flex: 1; position: relative; }
.scene { display: block; }
.axis text { font: 12px "Liberation Sans", sans-serif; }
.axis.small text { font-size: 11px; }
.roller { position: absolute; left: 662px; top: -15px; width: 9px; height: 58px; border-radius: 4px; overflow: hidden; border: 1px solid #ccc; display: flex; flex-direction: column; }
.roller-dark { height: 31px; background: #4a4a4a; }
.roller-green { flex: 1; background: repeating-linear-gradient(#3eb35c 0 1px, #2a5a3a 1px 2px); }
.edge-flag { position: absolute; left: 667px; top: 99px; width: 5px; display: flex; flex-direction: column; }
.edge-teal { height: 36px; background: #589fb9; }
.edge-white { height: 26px; background: #fff; border: 1px solid #ccc; border-right: 0; }

.status { height: 23px; flex: none; background: #fff; display: flex; align-items: center; justify-content: space-between; padding: 0 56px 0 3px; font-size: 14px; font-weight: 500; letter-spacing: .15px; color: #1c1c1c; }

.taskbar { height: 50px; flex: none; background: #1f2d36; display: flex; align-items: center; color: #fff; }
.win { margin-left: 20px; }
.tb-search { margin-left: 20px; width: 194px; height: 34px; background: #f1f1f1; display: flex; align-items: center; padding-left: 6px; color: #222; font-size: 12px; }
.tri { width: 0; height: 0; border-left: 2.500px solid transparent; border-right: 2.500px solid transparent; border-bottom: 3px solid #aaa; margin-left: 3px; }
.tb-q { margin-left: 6px; }
.tb-go { margin-left: auto; width: 56px; height: 34px; background: #2a8cf5; color: #fff; line-height: 34px; text-align: center; }
.tb-app { margin-left: 6px; width: 200px; height: 50px; background: #495258; border-bottom: 2px solid #66b5e8; display: flex; align-items: center; padding-left: 13px; font-size: 15.800px; color: #eee; gap: 4px; }
.ime { margin-left: 44px; width: 18px; height: 18px; background: #fff; border: 1px solid #111; color: #111; font-size: 14px; line-height: 15px; text-align: center; flex: none; }
.tray { margin-left: 28px; display: flex; align-items: center; }
.t1 { margin-left: 11px; } .t2 { margin-left: 10px; } .t3 { margin-left: 14px; } .t4 { margin-left: 14px; } .t5 { margin-left: 10px; } .t6 { margin-left: 13px; } .t7 { margin-left: 14px; } .t8 { margin-left: 13px; }
.clock { margin-left: 16px; width: 74px; display: flex; flex-direction: column; align-items: center; font-size: 15px; line-height: 20px; color: #eee; white-space: nowrap; }
.notes { margin-left: 25px; }
.bubble { margin-left: 30px; }

.timer { position: absolute; left: 981px; top: 16px; width: 62px; height: 62px; border-radius: 50%; background: linear-gradient(#1c8fe8, #5cc0f2); border: 3px solid #f0f6fa; color: #e8f6ff; font-size: 18px; line-height: 55px; padding-left: 8px; white-space: nowrap; overflow: hidden; }
```
